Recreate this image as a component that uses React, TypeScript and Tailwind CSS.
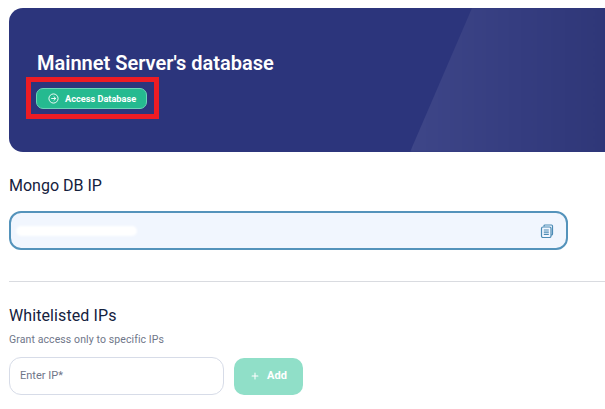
import { Plus } from "lucide-react";

export default function App() {
  return (
    <div className="h-[409px] w-[605px] overflow-hidden bg-white pl-[9px] pt-2 font-['Roboto',sans-serif] text-[#14213d]">
      <div className="relative h-[144px] w-[596px] overflow-hidden rounded-l-[14px] bg-[#2c357c]">
        <div className="absolute inset-y-0 left-[401px] right-0 bg-[linear-gradient(90deg,#3e4688,#353d80_55%,#2f3778)] blur-[1px] [clip-path:polygon(62px_0,100%_0,100%_100%,0_100%)]" />
        <div className="relative pl-[27px] pt-[40px]">
          <h1 className="pl-px text-[20px] leading-[30px] font-semibold text-white">Mainnet Server's database</h1>
          <button
            type="button"
            className="relative mt-[10px] flex h-[21px] w-[111px] items-center rounded-[7px] border border-[#6ad6b6] bg-[#25ba90] pl-[11px] text-[9.2px] font-bold text-white"
          >
            <svg viewBox="0 0 12 12" className="mr-[6px] size-[11px]" fill="none" stroke="currentColor" strokeWidth="1">
              <circle cx="6" cy="6" r="5" />
              <path d="M3.5 6h5M6.2 3.8 8.5 6 6.2 8.2" />
            </svg>
            Access Database
            <span className="absolute -top-[12px] -right-[13px] -bottom-[11px] -left-[11px] border-[5px] border-[#ed1c24]" />
          </button>
        </div>
      </div>

      <h2 className="mt-[24px] text-base leading-5">Mongo DB IP</h2>
      <div className="mt-[15px] flex h-[39px] w-[559px] items-center justify-between rounded-xl border-2 border-[#5493bb] bg-[#f1f6fe] pl-[5px] pr-[12px]">
        <div className="h-[10px] w-[121px] rounded-full bg-white blur-[1px]" />
        <svg viewBox="0 0 14 14" className="size-[14px] text-[#4b8bb5]" fill="none" stroke="currentColor" strokeWidth="1.2">
          <path d="M4 2.5V2a1 1 0 0 1 1-1h6.5a1 1 0 0 1 1 1v8a1 1 0 0 1-1 1H11" />
          <rect x="1.5" y="3" width="9.5" height="10.5" rx="1.5" />
          <path d="M3.8 6h5M3.8 8.2h5M3.8 10.4h5" />
        </svg>
      </div>

      <hr className="mt-[31px] border-[#d9dbe0]" />

      <h2 className="mt-6 text-base leading-5 tracking-[0.1px]">Whitelisted IPs</h2>
      <p className="mt-[7px] text-[10.5px] leading-[14px] tracking-[0.1px] text-[#6f7689]">Grant access only to specific IPs</p>
      <div className="mt-[10px] flex items-center gap-[10px]">
        <div className="flex h-[38px] w-[215px] items-center rounded-xl border border-[#d7dce8] pl-[10px] text-[11px] text-[#6f7689]">
          Enter IP*
        </div>
        <button
          type="button"
          className="flex h-[37px] w-[69px] items-center justify-center gap-[7px] rounded-[10px] bg-[#90dfc8] text-[11px] font-bold text-white"
        >
          <Plus className="size-[10px]" strokeWidth={2.5} />
          Add
        </button>
      </div>
    </div>
  );
}
